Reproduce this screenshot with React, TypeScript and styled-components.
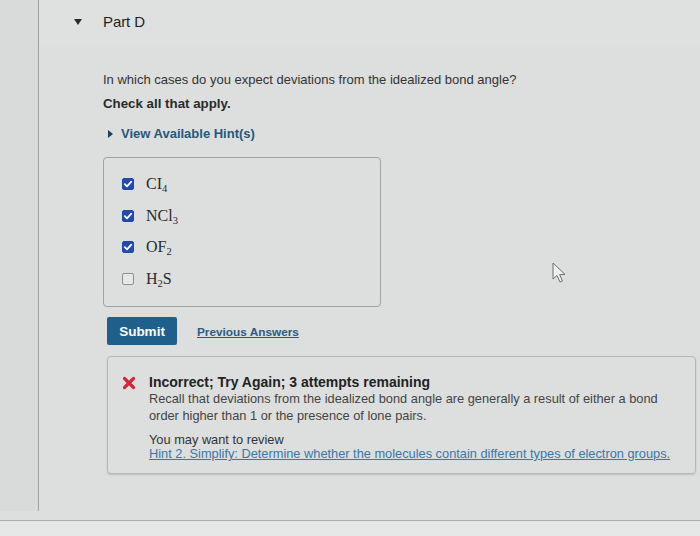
import * as React from "react";
import styled, { createGlobalStyle } from "styled-components";

type Choice = { id: string; base: React.ReactNode; checked: boolean };

const choices: Choice[] = [
  { id: "cl4", base: <>CI<sub>4</sub></>, checked: true },
  { id: "ncl3", base: <>NCl<sub>3</sub></>, checked: true },
  { id: "of2", base: <>OF<sub>2</sub></>, checked: true },
  { id: "h2s", base: <>H<sub>2</sub>S</>, checked: false },
];

const GlobalStyle = createGlobalStyle`
  html, body {
    margin: 0;
    padding: 0;
    background: #dcdfde;
  }
  body {
    font-family: "Liberation Sans", Arial, sans-serif;
    color: #2b2b2b;
  }
`;

export default function App() {
  return (
    <>
      <GlobalStyle />
      <Screen>
        <Upper>
          <Gutter />
          <Main>
            <Header>
              <DownCaret />
              <PartTitle>Part D</PartTitle>
            </Header>
            <Body>
              <Question>
                In which cases do you expect deviations from the idealized bond
                angle?
              </Question>
              <Instruction>Check all that apply.</Instruction>
              <HintToggle>
                <RightCaret />
                View Available Hint(s)
              </HintToggle>
              <OptionsBox>
                {choices.map((c) => (
                  <OptionRow key={c.id}>
                    <Box $checked={c.checked}>
                      {c.checked && (
                        <svg width="10" height="10" viewBox="0 0 10 10">
                          <path
                            d="M1.8 5.2 L4 7.3 L8.3 2.6"
                            fill="none"
                            stroke="#fff"
                            strokeWidth="1.8"
                            strokeLinecap="round"
                            strokeLinejoin="round"
                          />
                        </svg>
                      )}
                    </Box>
                    <Formula>{c.base}</Formula>
                  </OptionRow>
                ))}
              </OptionsBox>
              <Actions>
                <SubmitButton>Submit</SubmitButton>
                <PrevLink>Previous Answers</PrevLink>
              </Actions>
              <Feedback>
                <CrossIcon viewBox="0 0 14 14">
                  <path
                    d="M2.5 2.5 L11.5 11.5 M11.5 2.5 L2.5 11.5"
                    stroke="#d3263c"
                    strokeWidth="3.2"
                    strokeLinecap="round"
                  />
                </CrossIcon>
                <FeedbackText>
                  <FeedbackTitle>
                    Incorrect; Try Again; 3 attempts remaining
                  </FeedbackTitle>
                  <FeedbackBody>
                    Recall that deviations from the idealized bond angle are
                    generally a result of either a bond order higher than 1 or
                    the presence of lone pairs.
                  </FeedbackBody>
                  <Review>
                    You may want to review
                    <br />
                    <HintLink>
                      Hint 2. Simplify: Determine whether the molecules contain
                      different types of electron groups.
                    </HintLink>
                  </Review>
                </FeedbackText>
              </Feedback>
            </Body>
          </Main>
          <Cursor width="16" height="22" viewBox="0 0 16 22">
            <path
              d="M1 1 L1 17 L5 13.5 L8 20 L10.5 19 L7.6 12.6 L13 12.4 Z"
              fill="#eef0ef"
              stroke="#6b6f70"
              strokeWidth="1"
              strokeLinejoin="round"
            />
          </Cursor>
        </Upper>
        <Footer />
      </Screen>
    </>
  );
}

const Screen = styled.div`
  width: 700px;
  height: 536px;
  display: flex;
  flex-direction: column;
  overflow: hidden;
`;

const Upper = styled.div`
  position: relative;
  height: 520px;
  display: flex;
  align-items: flex-start;
`;

const Gutter = styled.div`
  width: 38px;
  height: 511px;
  flex-shrink: 0;
  background: #d8dbda;
  border-right: 1px solid #9ea2a3;
`;

const Main = styled.div`
  flex: 1;
  display: flex;
  flex-direction: column;
`;

const Header = styled.div`
  height: 45px;
  display: flex;
  align-items: center;
  gap: 21px;
  padding-left: 35px;
  padding-bottom: 2px;
  box-sizing: border-box;
  background: #dee1e0;
`;

const DownCaret = styled.span`
  width: 0;
  height: 0;
  border-left: 4.5px solid transparent;
  border-right: 4.5px solid transparent;
  border-top: 6px solid #2a2a2a;
`;

const PartTitle = styled.span`
  font-size: 15px;
  color: #1f1f1f;
  letter-spacing: -0.1px;
`;

const Body = styled.div`
  display: flex;
  flex-direction: column;
  align-items: flex-start;
  padding-left: 64px;
  padding-top: 26px;
`;

const Question = styled.div`
  font-size: 13px;
  line-height: 18px;
  color: #333;
`;

const Instruction = styled.div`
  margin-top: 6px;
  font-size: 13.3px;
  line-height: 18px;
  font-weight: 700;
  color: #2a2a2a;
`;

const HintToggle = styled.div`
  margin-top: 12px;
  display: flex;
  align-items: center;
  gap: 8px;
  padding-left: 5px;
  font-size: 13px;
  line-height: 18px;
  font-weight: 700;
  color: #24587c;
`;

const RightCaret = styled.span`
  width: 0;
  height: 0;
  border-top: 4.5px solid transparent;
  border-bottom: 4.5px solid transparent;
  border-left: 5px solid #1f3f5a;
`;

const OptionsBox = styled.div`
  margin-top: 14px;
  width: 278px;
  height: 150px;
  box-sizing: border-box;
  border: 1px solid #9fa3a4;
  border-radius: 4px;
  display: flex;
  flex-direction: column;
  gap: 9.7px;
  padding: 15px 0 0 18px;
`;

const OptionRow = styled.div`
  height: 22px;
  display: flex;
  align-items: center;
  gap: 12px;
`;

const Box = styled.span<{ $checked: boolean }>`
  width: 12px;
  height: 12px;
  box-sizing: border-box;
  border-radius: 2px;
  display: flex;
  align-items: center;
  justify-content: center;
  background: ${(p) => (p.$checked ? "#2349b1" : "#e6e8e8")};
  border: 1px solid ${(p) => (p.$checked ? "#2349b1" : "#8c9091")};
`;

const Formula = styled.span`
  font-family: "Liberation Serif", "Times New Roman", serif;
  font-size: 16px;
  color: #2a2a2a;

  sub {
    font-size: 10.5px;
    vertical-align: -3px;
    line-height: 0;
  }
`;

const Actions = styled.div`
  margin-top: 10px;
  margin-left: 4px;
  display: flex;
  align-items: center;
  gap: 20px;
`;

const SubmitButton = styled.button`
  width: 70px;
  height: 28px;
  border: none;
  border-radius: 2px;
  background: #1e5f8b;
  color: #fff;
  font-family: "Liberation Sans", Arial, sans-serif;
  font-size: 13.5px;
  font-weight: 700;
  padding: 0;
`;

const PrevLink = styled.a`
  font-size: 11.8px;
  font-weight: 700;
  color: #2b5c86;
  text-decoration: underline;
  margin-top: 1px;
`;

const Feedback = styled.div`
  margin-top: 11px;
  margin-left: 4px;
  width: 589px;
  height: 118px;
  box-sizing: border-box;
  border: 1px solid #b4b8b8;
  border-radius: 4px;
  box-shadow: 0 1px 2px rgba(0, 0, 0, 0.15);
  display: flex;
  align-items: flex-start;
  gap: 13px;
  padding: 17px 0 0 14px;
`;

const CrossIcon = styled.svg`
  width: 14px;
  height: 14px;
  flex-shrink: 0;
  margin-top: 2px;
`;

const FeedbackText = styled.div`
  display: flex;
  flex-direction: column;
  color: #2e2e2e;
`;

const FeedbackTitle = styled.div`
  font-size: 14px;
  line-height: 16px;
  font-weight: 700;
  color: #222;
`;

const FeedbackBody = styled.div`
  font-size: 12.8px;
  line-height: 17px;
  width: 515px;
  color: #444;
`;

const Review = styled.div`
  margin-top: 9px;
  font-size: 12.8px;
  line-height: 14px;
  color: #333;
`;

const HintLink = styled.a`
  color: #3a77a6;
  text-decoration: underline;
`;

const Cursor = styled.svg`
  position: absolute;
  left: 552px;
  top: 262px;
`;

const Footer = styled.div`
  flex: 1;
  border-top: 1px solid #a9adad;
  background: #e6e8e8;
`;
